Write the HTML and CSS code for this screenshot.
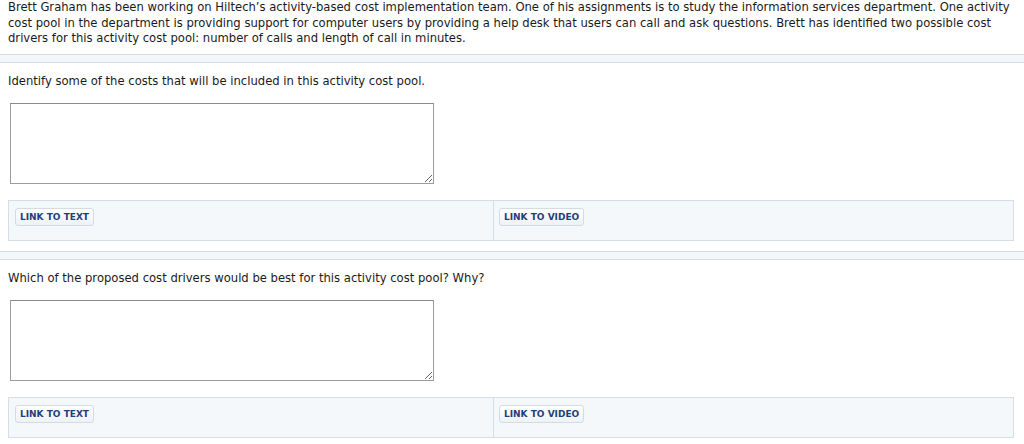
FILE: index.html
```html
<!DOCTYPE html>
<html>
<head>
<meta charset="utf-8">
<link rel="stylesheet" href="styles.css">
</head>
<body>
<div class="intro">Brett Graham has been working on Hiltech’s activity-based cost implementation team. One of his assignments is to study the information services department. One activity cost pool in the department is providing support for computer users by providing a help desk that users can call and ask questions. Brett has identified two possible cost drivers for this activity cost pool: number of calls and length of call in minutes.</div>
<div class="sep"></div>
<section class="q">
  <p class="q-text">Identify some of the costs that will be included in this activity cost pool.</p>
  <textarea class="answer"></textarea>
  <div class="links">
    <div class="cell"><span class="btn">LINK TO TEXT</span></div>
    <div class="cell"><span class="btn">LINK TO VIDEO</span></div>
  </div>
</section>
<div class="sep"></div>
<section class="q">
  <p class="q-text">Which of the proposed cost drivers would be best for this activity cost pool? Why?</p>
  <textarea class="answer"></textarea>
  <div class="links">
    <div class="cell"><span class="btn">LINK TO TEXT</span></div>
    <div class="cell"><span class="btn">LINK TO VIDEO</span></div>
  </div>
</section>
</body>
</html>
```
FILE: styles.css
```css
html, body {
  margin: 0;
  padding: 0;
  background: #fff;
}
body {
  font-family: "DejaVu Sans", Verdana, sans-serif;
  font-size: 11.6px;
  color: #1a1a1a;
  width: 1024px;
}
.intro {
  padding: 0 0 0 8px;
  line-height: 15.5px;
  width: 1012px;
}
.sep {
  margin-top: 7px;
  height: 7px;
  border-top: 1px solid #d5dce5;
  border-bottom: 1px solid #d5dce5;
  background: #f4f7fa;
}
.q {
  padding: 0 10px 0 8px;
}
.q-text {
  margin: 0;
  padding-top: 11px;
  line-height: 15px;
}
.answer {
  display: block;
  box-sizing: border-box;
  margin: 14px 0 0 2px;
  width: 424px;
  height: 81px;
  border: 1px solid #9c9c9c;
  border-top-color: #8a8a8a;
  background: #fff;
  padding: 2px;
  resize: both;
}
.links {
  margin-top: 16px;
  margin-bottom: 10px;
  display: grid;
  grid-template-columns: 484px 1fr;
  border: 1px solid #d6dde6;
  background: #f5f8fb;
  height: 41px;
  box-sizing: border-box;
  width: 1006px;
}
.cell {
  padding: 7px 6px 0 6px;
}
.cell + .cell {
  border-left: 1px solid #d6dde6;
  padding-left: 5px;
}
.btn {
  display: inline-block;
  height: 18px;
  box-sizing: border-box;
  padding: 0 4px;
  line-height: 17px;
  font-size: 9px;
  font-weight: bold;
  color: #1f3f7c;
  border: 1px solid #d5dbe3;
  border-radius: 3px;
  background: linear-gradient(#ffffff, #eef2f6);
}
```
